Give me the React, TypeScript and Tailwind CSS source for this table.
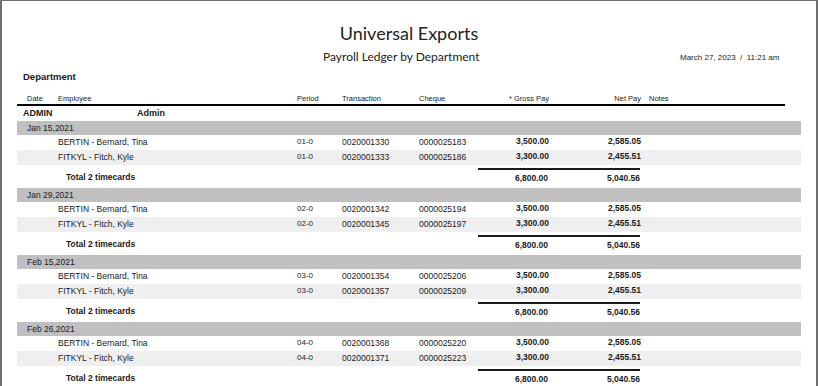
import React from "react";

const sections = [
  { date: "Jan 15,2021", p: "01-0", rows: [["0020001330", "0000025183"], ["0020001333", "0000025186"]] },
  { date: "Jan 29,2021", p: "02-0", rows: [["0020001342", "0000025194"], ["0020001345", "0000025197"]] },
  { date: "Feb 15,2021", p: "03-0", rows: [["0020001354", "0000025206"], ["0020001357", "0000025209"]] },
  { date: "Feb 26,2021", p: "04-0", rows: [["0020001368", "0000025220"], ["0020001371", "0000025223"]] },
];

const people = [
  { name: "BERTIN - Bernard, Tina", gross: "3,500.00", net: "2,585.05" },
  { name: "FITKYL - Fitch, Kyle", gross: "3,300.00", net: "2,455.51" },
];

const small = { fontFamily: '"Liberation Sans", Arial, sans-serif' };
const head = { fontFamily: 'Lato, "Open Sans", sans-serif' };

export default function App() {
  return (
    <div
      className="w-[818px] h-[386px] overflow-hidden bg-white border-t border-l-2 border-r-2 border-[#707070] text-[#1a1a1a]"
      style={small}
    >
      <div className="h-[20px]" />
      <div className="h-[24px] leading-[24px] text-[18px] text-center text-[#222]" style={head}>
        Universal Exports
      </div>
      <div className="h-[3px]" />
      <div className="flex h-[18px] items-center">
        <div className="pl-[321px] w-[678px] text-[12px] leading-[18px] text-[#222]" style={head}>
          Payroll Ledger by Department
        </div>
        <div className="text-[8px] leading-[18px] pt-[1px]">March 27, 2023&nbsp; /&nbsp; 11:21 am</div>
      </div>
      <div className="h-[5px]" />
      <div className="h-[12px] leading-[12px] pl-[21px] text-[9.5px] font-bold">Department</div>
      <div className="h-[10px]" />
      <div className="ml-[15px] w-[768px] border-b-2 border-black flex h-[13px] items-center text-[7.5px] leading-[12px]">
        <div className="w-[41px] pl-[10px]">Date</div>
        <div className="w-[239px]">Employee</div>
        <div className="w-[45px]">Period</div>
        <div className="w-[77px]">Transaction</div>
        <div className="w-[61px]">Cheque</div>
        <div className="w-[69px] text-right">* Gross Pay</div>
        <div className="w-[92px] text-right">Net Pay</div>
        <div className="pl-[8px]">Notes</div>
      </div>
      <div className="ml-[15px] flex h-[15px] items-center text-[9px] font-bold">
        <div className="w-[120px] pl-[6px]">ADMIN</div>
        <div>Admin</div>
      </div>
      <div className="ml-[15px] w-[784px]">
        {sections.map((s) => (
          <div key={s.date}>
            <div className="h-[14px] bg-[#c0c0c0] flex items-center pl-[10px] text-[8.5px] leading-[14px]">
              {s.date}
            </div>
            {people.map((p, i) => (
              <div
                key={p.name}
                className={`h-[15px] flex items-center text-[8.5px] leading-[15px] ${i === 1 ? "bg-[#efefef]" : "bg-white"}`}
              >
                <div className="w-[280px] pl-[41px]">{p.name}</div>
                <div className="w-[45px] text-[8px] -mt-[3px]">{s.p}</div>
                <div className="w-[77px]">{s.rows[i][0]}</div>
                <div className="w-[61px]">{s.rows[i][1]}</div>
                <div className="w-[69px] text-right text-[8.5px] font-bold -mt-[2px]">{p.gross}</div>
                <div className="w-[92px] text-right text-[8.5px] font-bold -mt-[2px]">{p.net}</div>
              </div>
            ))}
            <div className="h-[23px] flex text-[8.5px]">
              <div className="w-[461px] pl-[49px] pt-[6px] font-bold leading-[12px]">Total 2 timecards</div>
              <div className="w-[162px]">
                <div className="h-[2px] mt-[3px] bg-[#1a1a1a]" />
                <div className="flex font-bold text-[8.5px] leading-[12px] pt-[2px]">
                  <div className="w-[70px] text-right">6,800.00</div>
                  <div className="w-[92px] text-right">5,040.56</div>
                </div>
              </div>
            </div>
          </div>
        ))}
      </div>
    </div>
  );
}
